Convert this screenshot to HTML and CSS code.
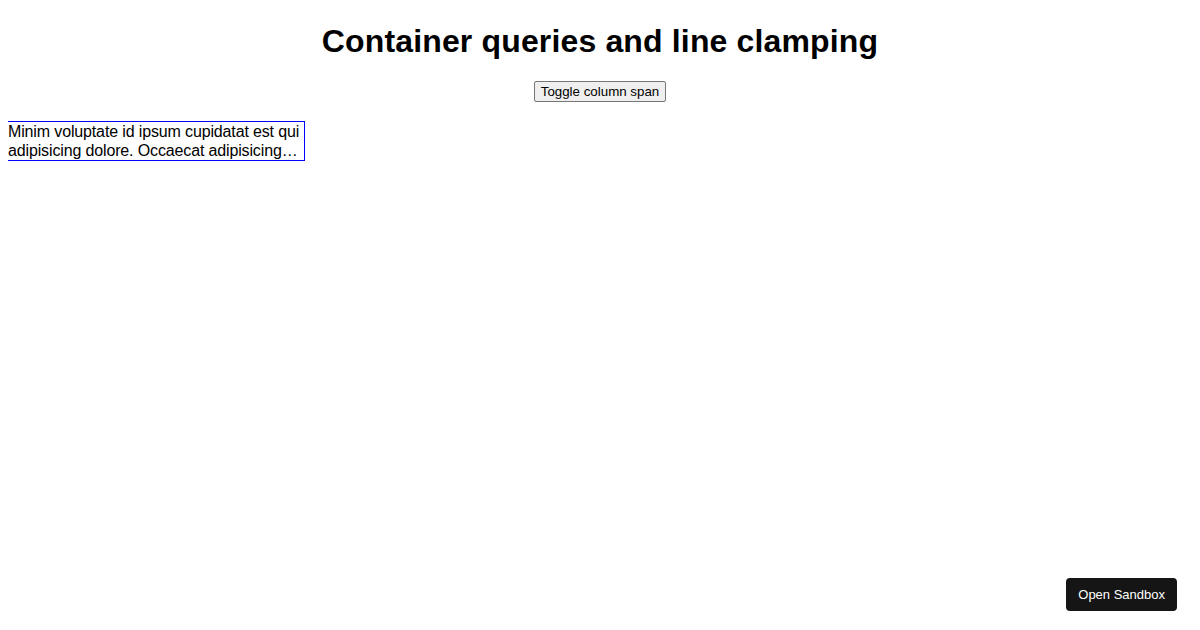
FILE: index.html
```html
<!DOCTYPE html>
<html>
<head>
<meta charset="utf-8">
<link rel="stylesheet" href="styles.css">
</head>
<body>
<h1 class="title">Container queries and line clamping</h1>
<div class="controls"><button class="toggle">Toggle column span</button></div>
<div class="grid">
  <div class="card"><p class="clamp">Minim voluptate id ipsum cupidatat est qui adipisicing dolore. Occaecat adipisicing elit amet consequat exercitation cupidatat nisi magna ut ullamco ex do laborum.</p></div>
</div>
<a class="sandbox">Open Sandbox</a>
</body>
</html>
```
FILE: styles.css
```css
body {
  margin: 8px;
  font-family: "Liberation Sans", Arial, sans-serif;
  color: #000;
  background: #fff;
}
.title {
  text-align: center;
  font-size: 32px;
  font-weight: bold;
  letter-spacing: 0.15px;
  margin: 15px 0 21px;
}
.controls {
  text-align: center;
  margin: 0 0 20px;
}
.toggle {
  font-family: "Liberation Sans", Arial, sans-serif;
  font-size: 13.33px;
  padding: 2px 6px;
  border: 1px solid #767676;
  border-radius: 2px;
  background: #efefef;
  color: #000;
}
.grid {
  display: grid;
  grid-template-columns: repeat(4, 1fr);
  padding: 0 0 1px;
}
.card {
  box-shadow: 0 0 0 1px #0000ff;
  height: 38px;
}
.clamp {
  margin: 0;
  font-size: 16px;
  line-height: 19px;
  letter-spacing: -0.14px;
  display: -webkit-box;
  -webkit-box-orient: vertical;
  -webkit-line-clamp: 2;
  overflow: hidden;
}
.sandbox {
  position: fixed;
  right: 23px;
  bottom: 19px;
  background: #151515;
  color: #fff;
  font-size: 13px;
  padding: 9px 12px;
  border-radius: 4px;
  font-family: "Liberation Sans", Arial, sans-serif;
}
```
